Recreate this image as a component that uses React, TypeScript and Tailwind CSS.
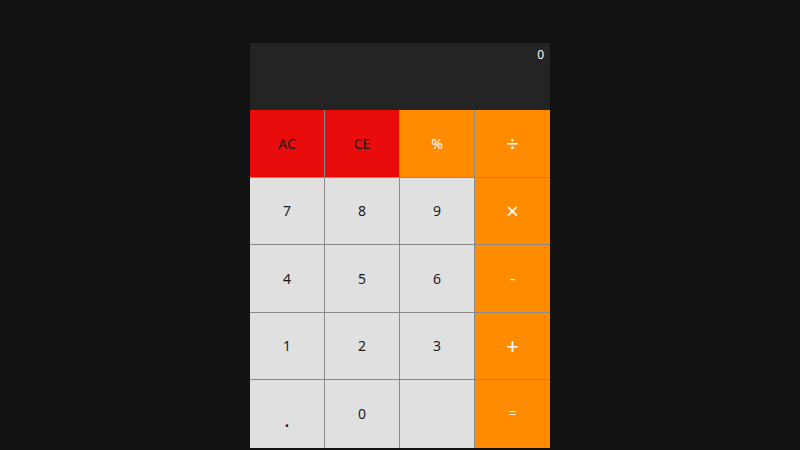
import React from 'react';

type Key = { label: string; cls: string; text?: string };

const keys: Key[] = [
  { label: 'AC', cls: 'bg-[#e80c0c] text-[#1a1a1a]' },
  { label: 'CE', cls: 'bg-[#e80c0c] text-[#1a1a1a]' },
  { label: '%', cls: 'bg-[#ff8c00] text-white' },
  { label: '÷', cls: 'bg-[#ff8c00] text-white', text: 'text-[22px]' },
  { label: '7', cls: 'bg-[#e0e0e0] text-[#1a1a1a]' },
  { label: '8', cls: 'bg-[#e0e0e0] text-[#1a1a1a]' },
  { label: '9', cls: 'bg-[#e0e0e0] text-[#1a1a1a]' },
  { label: '×', cls: 'bg-[#ff8c00] text-white', text: 'text-[22px]' },
  { label: '4', cls: 'bg-[#e0e0e0] text-[#1a1a1a]' },
  { label: '5', cls: 'bg-[#e0e0e0] text-[#1a1a1a]' },
  { label: '6', cls: 'bg-[#e0e0e0] text-[#1a1a1a]' },
  { label: '-', cls: 'bg-[#ff8c00] text-white', text: 'text-[16px]' },
  { label: '1', cls: 'bg-[#e0e0e0] text-[#1a1a1a]' },
  { label: '2', cls: 'bg-[#e0e0e0] text-[#1a1a1a]' },
  { label: '3', cls: 'bg-[#e0e0e0] text-[#1a1a1a]' },
  { label: '+', cls: 'bg-[#ff8c00] text-white', text: 'text-[22px]' },
  { label: '.', cls: 'bg-[#e0e0e0] text-[#1a1a1a]', text: 'text-[20px] pt-[12px]' },
  { label: '0', cls: 'bg-[#e0e0e0] text-[#1a1a1a]' },
  { label: '', cls: 'bg-[#e0e0e0] text-[#1a1a1a]' },
  { label: '=', cls: 'bg-[#ff8c00] text-white', text: 'text-[13px]' },
];

export default function App() {
  return (
    <div className="w-[800px] h-[450px] bg-[#121212] flex justify-center pt-[43px] font-['Noto_Sans',sans-serif] overflow-hidden">
      <div className="w-[300px] flex flex-col">
        {/* Display */}
        <div className="h-[67px] bg-[#242424] text-white text-[12px] text-right px-[6px] pt-[3px]">0</div>

        {/* Keypad */}
        <div className="grid grid-cols-4">
          {keys.map((k, i) => (
            <button
              key={i}
              className={`h-[67.5px] flex items-center justify-center border-[#8a8a8a] ${i % 4 !== 3 ? 'border-r' : ''} ${i < 16 ? 'border-b' : ''} ${k.cls} ${k.text ?? 'text-[14px]'}`}
            >
              {k.label}
            </button>
          ))}
        </div>
      </div>
    </div>
  );
}
